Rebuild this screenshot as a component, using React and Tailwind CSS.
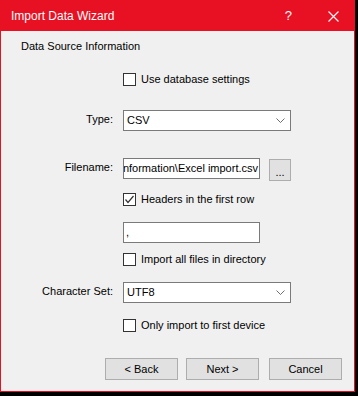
import React from 'react';

const font = { fontFamily: '"Liberation Sans", Arial, sans-serif' };

function Check({ checked, label, className = '' }) {
  return (
    <div className={`flex items-center h-[13px] pl-[122px] ${className}`}>
      <div className="w-[13px] h-[13px] border border-[#333333] bg-white flex-shrink-0">
        {checked && (
          <svg width="11" height="11" viewBox="0 0 11 11">
            <path d="M1.5 5.5 L4 8.5 L9.5 2" fill="none" stroke="#333333" strokeWidth="1.2" />
          </svg>
        )}
      </div>
      <span className="ml-[5px] text-[11px] leading-[13px] text-black whitespace-nowrap">{label}</span>
    </div>
  );
}

function Chevron() {
  return (
    <svg width="9" height="5" viewBox="0 0 9 5" className="flex-shrink-0 mr-[2px]">
      <path d="M0.5 0.5 L4.5 4.5 L8.5 0.5" fill="none" stroke="#606060" strokeWidth="0.9" />
    </svg>
  );
}

function Select({ value }) {
  return (
    <div className="w-[168px] h-[21px] bg-white border border-[#7a7a7a] flex items-center pl-[3px] pr-[3px]">
      <span className="flex-1 text-[11px] text-black">{value}</span>
      <Chevron />
    </div>
  );
}

function Label({ children }) {
  return (
    <div className="w-[112px] text-right text-[11px] text-black pb-[3px] whitespace-nowrap">{children}</div>
  );
}

function Btn({ children, className = '' }) {
  return (
    <button className={`h-[22px] bg-[#e1e1e1] border border-[#adadad] text-[11px] text-black flex items-center justify-center ${className}`}>
      {children}
    </button>
  );
}

export default function App() {
  return (
    <div className="w-[358px] h-[396px] bg-black" style={font}>
      <div className="w-[355px] h-[392px] border border-[#e81123] bg-[#f0f0f0] flex flex-col">
        {/* Title bar */}
        <div className="h-[30px] bg-[#e81123] flex items-center text-white">
          <span className="ml-[10px] text-[12px] flex-1">Import Data Wizard</span>
          <span className="text-[13px] mr-[36px]">?</span>
          <svg width="11" height="11" viewBox="0 0 11 11" className="mr-[15px]">
            <path d="M0.5 0.5 L10.5 10.5 M10.5 0.5 L0.5 10.5" stroke="#ffffff" strokeWidth="1.1" />
          </svg>
        </div>

        <div className="mt-[9px] ml-[20px] text-[11px] leading-[13px] text-black">Data Source Information</div>

        <Check className="mt-[20px]" label="Use database settings" />

        <div className="mt-[24px] flex items-center">
          <Label>Type:</Label>
          <div className="ml-[10px]"><Select value="CSV" /></div>
        </div>

        <div className="mt-[27px] flex items-start">
          <div className="h-[21px] flex items-center"><Label>Filename:</Label></div>
          <div className="ml-[10px] w-[137px] h-[21px] bg-white border border-[#7a7a7a] flex items-center justify-end overflow-hidden pr-[1px]">
            <span className="text-[11px] text-black whitespace-nowrap">Information\Excel import.csv</span>
          </div>
          <Btn className="ml-[9px] mt-[1px] w-[22px] items-end pb-[2px] leading-none">...</Btn>
        </div>

        <Check className="mt-[12px]" checked label="Headers in the first row" />

        <div className="mt-[16px] pl-[122px]">
          <div className="w-[137px] h-[21px] bg-white border border-[#7a7a7a] flex items-center pl-[2px] text-[11px] text-black">,</div>
        </div>

        <Check className="mt-[10px]" label="Import all files in directory" />

        <div className="mt-[16px] flex items-center">
          <Label>Character Set:</Label>
          <div className="ml-[10px]"><Select value="UTF8" /></div>
        </div>

        <Check className="mt-[16px]" label="Only import to first device" />

        <div className="mt-[26px] flex pl-[104px]">
          <Btn className="w-[73px]">&lt; Back</Btn>
          <Btn className="w-[73px] ml-[8px]">Next &gt;</Btn>
          <Btn className="w-[73px] ml-[10px]">Cancel</Btn>
        </div>
      </div>
    </div>
  );
}
